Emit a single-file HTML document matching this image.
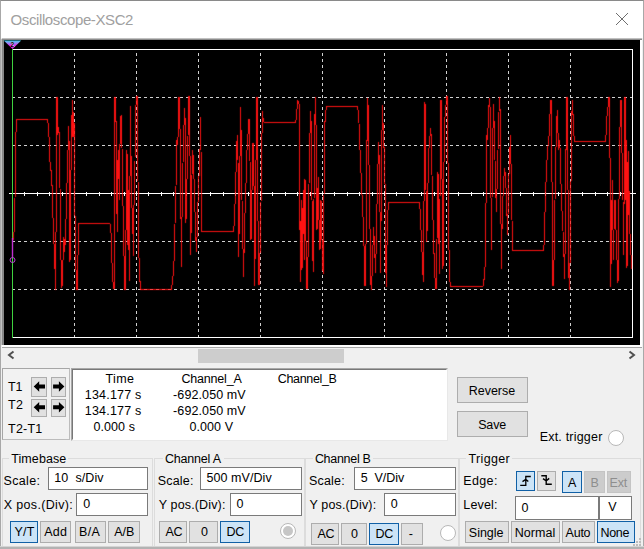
<!DOCTYPE html>
<html><head><meta charset="utf-8"><title>Oscilloscope-XSC2</title>
<style>
html,body{margin:0;padding:0;}
body{width:644px;height:549px;overflow:hidden;background:#f0f0f0;font-family:"Liberation Sans","DejaVu Sans",sans-serif;font-size:12.5px;color:#000;position:relative;}
.abs,.t,.btn,.inp,.grp{position:absolute;box-sizing:border-box;}
.win{position:absolute;left:0;top:0;width:644px;height:549px;box-sizing:border-box;border:1px solid #a8a8a8;border-top-color:#8a8a8a;}
.title{position:absolute;left:1px;top:1px;width:642px;height:37px;background:#fff;}
.t{white-space:nowrap;line-height:16px;height:16px;}
.btn{background:#e1e1e1;border:1px solid #adadad;}
.btn.sel{background:#cce4f7;border-color:#1060a6;}
.btn.dis{background:#cccccc;border-color:#c4c4c4;}
.inp{background:#fff;border:1px solid #7a7a7a;}
.grp{border:1px solid #dcdcdc;}
.radio{position:absolute;box-sizing:border-box;width:16px;height:16px;border-radius:50%;background:#fff;border:1px solid #b8b8b8;}
.scope{position:absolute;left:4px;top:40px;}
</style></head><body>
<div class="title"></div>
<div class="t" style="left:10.6px;top:12px;letter-spacing:-0.4px;font-size:15px;color:#a0a0a0;">Oscilloscope-XSC2</div>
<svg class="abs" style="left:615px;top:12px" width="14" height="14" viewBox="0 0 14 14"><path d="M1 1 L13 13 M13 1 L1 13" stroke="#6e6e6e" stroke-width="1" fill="none"/></svg>
<div class="abs" style="left:2px;top:38px;width:640px;height:1px;background:#c0c0c0"></div>
<div class="abs" style="left:2px;top:39px;width:640px;height:1px;background:#8c8c8c"></div>
<div class="abs" style="left:1px;top:39px;width:1px;height:306px;background:#c0c0c0"></div><div class="abs" style="left:2px;top:40px;width:2px;height:305px;background:#868686"></div>
<div class="abs" style="left:640px;top:40px;width:2px;height:307px;background:#fff"></div>
<div class="abs" style="left:2px;top:345px;width:640px;height:2px;background:#fff"></div>
<div class="abs" style="left:2px;top:347px;width:640px;height:1px;background:#a6a6a6"></div>
<svg class="scope" width="636" height="306" viewBox="4 40 636 306">
<defs><filter id="bl" x="-1%" y="-1%" width="102%" height="102%" color-interpolation-filters="sRGB"><feConvolveMatrix order="3" kernelMatrix="0.02 0.09 0.02 0.09 0.56 0.09 0.02 0.09 0.02" divisor="1" edgeMode="none" preserveAlpha="false"/></filter><linearGradient id="mk" x1="0" y1="0" x2="0" y2="1"><stop offset="0" stop-color="#38d0e8"/><stop offset="0.3" stop-color="#9a8cf4"/><stop offset="0.6" stop-color="#e028e8"/><stop offset="1" stop-color="#e020e0"/></linearGradient></defs>
<rect x="4" y="40" width="636" height="305" fill="#000"/>
<g stroke="#d0d0d0" stroke-width="1" stroke-dasharray="3 3" shape-rendering="crispEdges"><line x1="74.5" y1="53" x2="74.5" y2="337"/><line x1="136.5" y1="53" x2="136.5" y2="337"/><line x1="198.5" y1="53" x2="198.5" y2="337"/><line x1="260.5" y1="53" x2="260.5" y2="337"/><line x1="322.5" y1="53" x2="322.5" y2="337"/><line x1="384.5" y1="53" x2="384.5" y2="337"/><line x1="446.5" y1="53" x2="446.5" y2="337"/><line x1="508.5" y1="53" x2="508.5" y2="337"/><line x1="570.5" y1="53" x2="570.5" y2="337"/><line x1="12" y1="97.5" x2="632" y2="97.5"/><line x1="12" y1="145.5" x2="632" y2="145.5"/><line x1="12" y1="241.5" x2="632" y2="241.5"/><line x1="12" y1="289.5" x2="632" y2="289.5"/></g>
<g stroke="#fff" stroke-width="1" shape-rendering="crispEdges">
<line x1="12" y1="49.5" x2="633" y2="49.5"/><line x1="12" y1="337.5" x2="633" y2="337.5"/>
<line x1="632.5" y1="49" x2="632.5" y2="338"/>
<line x1="9" y1="193.5" x2="636" y2="193.5"/><line x1="24.5" y1="192" x2="24.5" y2="196"/><line x1="37.5" y1="192" x2="37.5" y2="196"/><line x1="49.5" y1="192" x2="49.5" y2="196"/><line x1="62.5" y1="192" x2="62.5" y2="196"/><line x1="74.5" y1="192" x2="74.5" y2="196"/><line x1="86.5" y1="192" x2="86.5" y2="196"/><line x1="99.5" y1="192" x2="99.5" y2="196"/><line x1="111.5" y1="192" x2="111.5" y2="196"/><line x1="124.5" y1="192" x2="124.5" y2="196"/><line x1="136.5" y1="192" x2="136.5" y2="196"/><line x1="148.5" y1="192" x2="148.5" y2="196"/><line x1="161.5" y1="192" x2="161.5" y2="196"/><line x1="173.5" y1="192" x2="173.5" y2="196"/><line x1="186.5" y1="192" x2="186.5" y2="196"/><line x1="198.5" y1="192" x2="198.5" y2="196"/><line x1="210.5" y1="192" x2="210.5" y2="196"/><line x1="223.5" y1="192" x2="223.5" y2="196"/><line x1="235.5" y1="192" x2="235.5" y2="196"/><line x1="248.5" y1="192" x2="248.5" y2="196"/><line x1="260.5" y1="192" x2="260.5" y2="196"/><line x1="272.5" y1="192" x2="272.5" y2="196"/><line x1="285.5" y1="192" x2="285.5" y2="196"/><line x1="297.5" y1="192" x2="297.5" y2="196"/><line x1="310.5" y1="192" x2="310.5" y2="196"/><line x1="322.5" y1="192" x2="322.5" y2="196"/><line x1="334.5" y1="192" x2="334.5" y2="196"/><line x1="347.5" y1="192" x2="347.5" y2="196"/><line x1="359.5" y1="192" x2="359.5" y2="196"/><line x1="372.5" y1="192" x2="372.5" y2="196"/><line x1="384.5" y1="192" x2="384.5" y2="196"/><line x1="396.5" y1="192" x2="396.5" y2="196"/><line x1="409.5" y1="192" x2="409.5" y2="196"/><line x1="421.5" y1="192" x2="421.5" y2="196"/><line x1="434.5" y1="192" x2="434.5" y2="196"/><line x1="446.5" y1="192" x2="446.5" y2="196"/><line x1="458.5" y1="192" x2="458.5" y2="196"/><line x1="471.5" y1="192" x2="471.5" y2="196"/><line x1="483.5" y1="192" x2="483.5" y2="196"/><line x1="496.5" y1="192" x2="496.5" y2="196"/><line x1="508.5" y1="192" x2="508.5" y2="196"/><line x1="520.5" y1="192" x2="520.5" y2="196"/><line x1="533.5" y1="192" x2="533.5" y2="196"/><line x1="545.5" y1="192" x2="545.5" y2="196"/><line x1="558.5" y1="192" x2="558.5" y2="196"/><line x1="570.5" y1="192" x2="570.5" y2="196"/><line x1="582.5" y1="192" x2="582.5" y2="196"/><line x1="595.5" y1="192" x2="595.5" y2="196"/><line x1="607.5" y1="192" x2="607.5" y2="196"/><line x1="620.5" y1="192" x2="620.5" y2="196"/></g>
<line x1="12.5" y1="49" x2="12.5" y2="338" stroke="#3fd23f" stroke-width="1" shape-rendering="crispEdges"/>
<polyline points="13.3,240.0 14.5,226.0 15.5,170.0 15.6,146.0 16.4,119.3 16.4,119.3 47.8,119.3 47.8,119.3 48.5,130.0 49.7,147.0 50.2,170.0 51.7,170.0 52.2,194.0 52.7,210.0 55.0,269.0 55.2,289.0 55.6,289.0 57.0,97.0 57.6,97.0 57.8,135.0 58.9,127.0 59.5,152.0 61.4,287.0 62.0,287.0 63.9,237.0 64.6,252.0 65.5,237.0 67.6,162.0 68.9,126.0 69.3,180.0 70.0,262.0 70.6,193.0 72.3,100.0 72.8,100.0 73.0,137.0 73.3,112.0 73.6,137.0 73.9,113.0 74.2,138.0 74.6,193.0 75.8,260.0 76.4,289.0 77.6,289.0 78.2,240.0 78.8,223.4 78.8,223.4 109.6,223.4 109.9,223.4 111.2,234.6 112.4,276.8 113.7,288.0 114.2,288.0 114.9,97.5 115.7,97.5 116.2,135.0 117.2,232.0 118.0,160.0 118.6,150.0 119.3,200.0 120.2,130.0 121.1,115.0 121.8,135.0 122.5,180.0 124.3,270.0 124.8,289.0 125.3,289.0 126.2,215.0 127.0,150.0 127.4,245.0 127.8,195.0 128.3,250.0 128.8,190.0 129.2,250.0 129.6,281.0 130.3,106.0 130.9,145.0 131.5,200.0 132.5,215.0 133.6,256.0 133.9,215.0 134.4,172.0 135.0,165.0 135.2,109.0 136.3,104.0 136.6,96.5 137.2,96.5 137.6,130.0 138.5,242.0 139.7,279.0 141.0,289.3 141.0,289.3 171.5,289.3 171.5,289.3 173.8,269.0 174.5,242.0 175.8,195.0 177.0,140.0 177.8,145.0 179.0,97.5 179.6,97.5 180.3,150.0 181.5,267.0 182.2,200.0 183.5,140.0 184.6,108.0 185.3,125.0 185.9,223.0 186.6,200.0 187.4,160.0 189.0,96.5 189.4,96.5 189.9,140.0 190.7,254.5 191.5,200.0 192.5,150.0 193.5,160.0 194.6,200.0 196.4,252.0 197.3,230.0 198.3,190.0 199.8,160.0 200.6,117.0 201.0,150.0 201.5,200.0 201.9,231.0 201.9,231.0 233.7,231.0 233.7,231.0 234.4,220.0 235.4,194.0 236.7,147.0 237.4,134.7 238.0,160.0 238.7,257.0 239.5,200.0 240.6,107.4 241.2,140.0 242.0,200.0 243.6,277.0 244.4,230.0 245.5,200.0 247.0,150.0 249.0,118.6 249.6,135.0 250.3,180.0 251.0,240.0 251.8,200.0 253.0,143.0 253.8,160.0 254.8,285.5 255.5,200.0 256.8,97.5 257.3,97.5 257.7,180.0 258.5,284.0 259.2,284.0 260.5,235.0 261.8,150.0 262.3,111.0 263.0,118.0 264.3,122.8 264.3,122.8 295.8,122.8 295.8,122.8 296.5,115.0 297.8,100.0 298.8,104.0 299.5,105.0 299.8,193.0 300.3,282.0 300.8,230.0 301.5,200.0 302.0,270.0 302.8,215.0 303.5,190.0 304.3,260.0 305.0,179.0 305.8,230.0 307.0,288.0 307.6,288.0 308.5,220.0 309.5,150.0 310.7,111.0 311.3,130.0 312.0,200.0 313.2,272.0 314.0,200.0 315.2,97.5 315.7,97.5 316.3,150.0 317.0,230.0 317.8,200.0 318.2,177.0 319.0,220.0 320.0,250.0 321.0,200.0 322.0,240.0 323.1,274.0 323.8,230.0 324.4,132.0 325.4,115.0 326.4,106.6 326.4,106.6 357.3,106.6 357.5,106.6 358.7,115.0 360.0,150.0 361.2,177.0 363.7,232.0 364.9,285.5 365.4,285.5 366.2,232.0 367.4,98.7 367.9,98.7 368.6,135.0 369.5,200.0 371.1,289.3 371.6,289.3 373.6,227.0 374.8,252.0 375.6,273.0 376.3,240.0 377.2,195.0 378.6,142.0 379.3,165.0 379.9,200.0 380.6,273.0 381.2,200.0 382.3,105.0 383.0,122.0 383.6,145.0 384.8,152.0 385.5,260.0 386.5,286.8 387.3,222.0 388.5,202.3 388.5,202.3 419.6,202.3 419.6,202.3 420.3,213.5 422.0,252.0 423.3,281.8 423.8,245.0 424.5,102.4 425.0,102.4 425.5,145.0 426.0,190.0 426.8,242.0 427.6,200.0 428.8,150.0 430.7,128.5 431.3,140.0 432.0,175.0 433.0,220.0 434.5,270.0 435.7,288.0 436.2,288.0 437.0,240.0 438.0,172.0 438.7,220.0 439.4,274.0 440.0,200.0 440.7,100.0 441.2,100.0 441.8,160.0 443.0,269.0 443.4,200.0 443.6,163.0 444.6,160.0 444.8,119.0 445.8,112.0 446.2,100.0 446.9,96.5 447.4,96.5 447.9,150.0 448.4,207.0 449.4,276.8 450.6,286.3 450.6,286.3 482.9,286.3 482.9,286.3 484.1,279.0 485.4,262.0 486.1,194.8 486.6,134.7 487.5,140.0 489.3,98.0 489.9,98.0 490.4,135.0 491.5,249.5 492.2,180.0 493.4,104.0 494.0,120.0 495.0,160.0 496.4,212.0 497.5,170.0 498.5,130.0 499.4,97.5 499.9,97.5 500.4,150.0 501.4,269.4 502.0,230.0 503.2,190.0 504.5,168.0 505.5,175.0 506.5,200.0 507.6,234.6 508.3,200.0 509.4,160.0 510.6,134.7 511.1,170.0 512.0,220.0 512.6,250.7 512.6,250.7 543.6,250.7 543.6,250.7 544.4,239.5 545.4,194.8 547.4,152.0 549.1,134.7 550.6,100.0 551.1,100.0 551.6,140.0 552.2,200.0 553.0,285.5 553.6,285.5 554.5,230.0 555.5,170.0 556.5,125.0 557.3,110.0 557.9,130.0 558.8,150.0 559.8,140.0 560.6,170.0 561.5,200.0 562.5,222.0 563.5,240.0 564.7,279.0 565.3,230.0 566.0,150.0 566.7,97.5 567.2,97.5 567.7,150.0 568.4,240.0 569.2,289.0 569.7,289.0 570.4,230.0 571.4,150.0 572.2,100.0 572.7,100.0 573.4,132.0 574.7,141.0 574.7,141.0 605.7,141.0 605.7,141.0 607.0,116.0 609.0,97.5 609.7,97.5 610.2,193.0 610.7,286.8 611.2,250.0 612.0,200.0 612.7,180.0 613.2,259.5 614.0,230.0 615.0,200.0 616.0,230.0 617.0,260.0 618.0,283.0 618.6,240.0 619.5,150.0 620.6,100.0 621.1,100.0 621.6,127.0 622.2,165.0 623.0,200.0 623.8,255.0 624.1,185.0 624.4,140.0 624.7,200.0 625.0,97.5 625.5,97.5 625.8,200.0 626.1,140.0 626.5,215.0 627.0,268.0 627.4,200.0 628.2,151.0 628.6,215.0 629.0,190.0 629.8,230.0 631.0,255.0 631.8,269.0" fill="none" stroke="#ff1212" stroke-width="1" stroke-linejoin="miter" shape-rendering="crispEdges" filter="url(#bl)"/>
<polygon points="3.8,40.5 21.2,40.5 12.5,49" fill="url(#mk)"/>
<text x="11" y="47.2" font-family="'Liberation Sans',sans-serif" font-size="6.5" font-weight="bold" fill="#fff">1</text><text x="10.4" y="46.8" font-family="'Liberation Sans',sans-serif" font-size="6.5" font-weight="bold" fill="#000">2</text>
<line x1="12.5" y1="238" x2="12.5" y2="257" stroke="#c030d0" stroke-width="1.4"/>
<circle cx="12.5" cy="260" r="2.5" fill="none" stroke="#c040d8" stroke-width="1"/>
</svg>
<!-- scrollbar -->
<div class="abs" style="left:198px;top:349px;width:146px;height:14px;background:#cdcdcd"></div>
<svg class="abs" style="left:6px;top:350px" width="10" height="10" viewBox="0 0 10 10"><path d="M7.5 1.5 L3 5 L7.5 8.5" stroke="#505050" stroke-width="2" fill="none"/></svg>
<svg class="abs" style="left:627px;top:350px" width="10" height="10" viewBox="0 0 10 10"><path d="M2.5 1.5 L7 5 L2.5 8.5" stroke="#505050" stroke-width="2" fill="none"/></svg>
<!-- cursor panel -->
<div class="abs" style="left:2px;top:368px;width:68px;height:72px;border:1px solid #a6a6a6;border-right-color:#bcbcbc;border-bottom-color:#bcbcbc;background:#f2f2f2"></div>
<div class="btn " style="left:31px;top:377px;width:16px;height:20px"></div><svg class="abs" style="left:0;top:0" width="80" height="440"><path d="M33.699999999999996 386.5 L39.199999999999996 381.3 V384.5 H45.0 V388.5 H39.199999999999996 V391.7 Z" fill="#000"/></svg>
<div class="btn " style="left:51px;top:377px;width:15px;height:20px"></div><svg class="abs" style="left:0;top:0" width="80" height="440"><path d="M64.4 386.5 L58.900000000000006 381.3 V384.5 H53.1 V388.5 H58.900000000000006 V391.7 Z" fill="#000"/></svg>
<div class="btn " style="left:31px;top:399px;width:16px;height:18px"></div><svg class="abs" style="left:0;top:0" width="80" height="440"><path d="M33.699999999999996 407.2 L39.199999999999996 402.0 V405.2 H45.0 V409.2 H39.199999999999996 V412.4 Z" fill="#000"/></svg>
<div class="btn " style="left:51px;top:399px;width:15px;height:18px"></div><svg class="abs" style="left:0;top:0" width="80" height="440"><path d="M64.4 407.2 L58.900000000000006 402.0 V405.2 H53.1 V409.2 H58.900000000000006 V412.4 Z" fill="#000"/></svg>

<!-- readout -->
<div class="abs" style="left:71px;top:368px;width:377px;height:73px;background:#fff;border:1px solid;border-color:#a8a8a8 #e8e8e8 #e8e8e8 #a8a8a8"><div class="abs" style="left:0;top:0;width:375px;height:71px;border:1px solid;border-color:#787878 #fff #fff #787878"></div></div>
<div class="btn " style="left:457px;top:377px;width:71px;height:26px"></div><div class="btn " style="left:457px;top:411px;width:71px;height:26px"></div>
<div class="radio" style="left:608px;top:430px"></div>
<!-- groups -->
<div class="grp" style="left:2px;top:458px;width:151px;height:92px"></div><div class="abs" style="left:9px;top:456px;width:59px;height:4px;background:#f0f0f0"></div><div class="t" style="left:11.2px;top:451px;letter-spacing:0.1px;">Timebase</div>
<div class="grp" style="left:154px;top:458px;width:151px;height:92px"></div><div class="abs" style="left:163px;top:456px;width:61px;height:4px;background:#f0f0f0"></div><div class="t" style="left:164.9px;top:451px;letter-spacing:-0.2px;">Channel A</div>
<div class="grp" style="left:305px;top:458px;width:154px;height:92px"></div><div class="abs" style="left:313px;top:456px;width:60px;height:4px;background:#f0f0f0"></div><div class="t" style="left:314.9px;top:451px;letter-spacing:-0.3px;">Channel B</div>
<div class="grp" style="left:459px;top:458px;width:182px;height:92px"></div><div class="abs" style="left:466px;top:456px;width:46px;height:4px;background:#f0f0f0"></div><div class="t" style="left:468.5px;top:451px;letter-spacing:0.35px;">Trigger</div>
<div class="inp" style="left:48px;top:467px;width:100px;height:23px"></div><div class="inp" style="left:76px;top:493px;width:72px;height:23px"></div>
<div class="btn sel" style="left:10px;top:521px;width:28px;height:22px"></div><div class="btn " style="left:40px;top:521px;width:31px;height:22px"></div><div class="btn " style="left:75px;top:521px;width:31px;height:22px"></div><div class="btn " style="left:108px;top:521px;width:32px;height:22px"></div>
<div class="inp" style="left:200px;top:467px;width:102px;height:23px"></div><div class="inp" style="left:230px;top:493px;width:72px;height:23px"></div>
<div class="btn " style="left:159px;top:521px;width:28px;height:22px"></div><div class="btn " style="left:189px;top:521px;width:29px;height:22px"></div><div class="btn sel" style="left:220px;top:521px;width:30px;height:22px"></div>
<div class="radio" style="left:280px;top:523px"><div class="abs" style="left:2px;top:2px;width:10px;height:10px;border-radius:50%;background:#c6c6c6"></div></div>
<div class="inp" style="left:354px;top:467px;width:102px;height:23px"></div><div class="inp" style="left:384px;top:493px;width:72px;height:23px"></div>
<div class="btn " style="left:311px;top:523px;width:28px;height:22px"></div><div class="btn " style="left:341px;top:523px;width:26px;height:22px"></div><div class="btn sel" style="left:369px;top:523px;width:30px;height:22px"></div><div class="btn " style="left:401px;top:523px;width:22px;height:22px"></div>
<div class="radio" style="left:440px;top:525px"></div>
<div class="btn sel" style="left:516px;top:471px;width:19px;height:20px"></div><div class="btn " style="left:537px;top:471px;width:19px;height:20px"></div>
<svg class="abs" style="left:516px;top:471px" width="40" height="21" viewBox="0 0 40 21"><path d="M4.2 14.4 H9.8 V5.5 H14.8 M6.5 10.6 L9.8 8.4 L12.3 10.6" stroke="#000" stroke-width="1.3" fill="none"/><path d="M25.3 4.8 H30.2 V13.3 H35.8 M27 7.6 L30.2 9.9 L33.2 7.4" stroke="#000" stroke-width="1.4" fill="none"/></svg>
<div class="btn sel" style="left:562px;top:471px;width:20px;height:22px"></div><div class="btn dis" style="left:584px;top:471px;width:21px;height:22px"></div><div class="btn dis" style="left:607px;top:471px;width:24px;height:22px"></div>
<div class="inp" style="left:515px;top:496px;width:84px;height:24px"></div><div class="inp" style="left:599px;top:496px;width:33px;height:24px"></div>
<div class="btn " style="left:465px;top:521px;width:44px;height:22px"></div><div class="btn " style="left:511px;top:521px;width:49px;height:22px"></div><div class="btn " style="left:562px;top:521px;width:33px;height:22px"></div><div class="btn sel" style="left:597px;top:521px;width:38px;height:22px"></div>
<div class="t" style="left:8.1px;top:379px;letter-spacing:-0.3px;">T1</div>
<div class="t" style="left:8.1px;top:397px;letter-spacing:0.3px;">T2</div>
<div class="t" style="left:8.1px;top:421px;letter-spacing:0.2px;">T2-T1</div>
<div class="t" style="left:105.5px;top:371px;letter-spacing:0.35px;">Time</div>
<div class="t" style="left:181.5px;top:371px;letter-spacing:-0.2px;">Channel_A</div>
<div class="t" style="left:277.8px;top:371px;letter-spacing:-0.35px;">Channel_B</div>
<div class="t" style="left:84.8px;top:387px;letter-spacing:0.2px;">134.177 s</div>
<div class="t" style="left:173.1px;top:387px;letter-spacing:0.1px;">-692.050 mV</div>
<div class="t" style="left:84.8px;top:403px;letter-spacing:0.2px;">134.177 s</div>
<div class="t" style="left:173.1px;top:403px;letter-spacing:0.1px;">-692.050 mV</div>
<div class="t" style="left:93.6px;top:419px;letter-spacing:0.05px;">0.000 s</div>
<div class="t" style="left:189.6px;top:419px;letter-spacing:0.05px;">0.000 V</div>
<div class="t" style="left:468.7px;top:383px;">Reverse</div>
<div class="t" style="left:478.2px;top:417px;letter-spacing:-0.15px;">Save</div>
<div class="t" style="left:539.7px;top:429px;letter-spacing:0.2px;">Ext. trigger</div>
<div class="t" style="left:3.5px;top:473px;letter-spacing:0.35px;">Scale:</div>
<div class="t" style="left:54.2px;top:470px;letter-spacing:0.1px;">10&nbsp; s/Div</div>
<div class="t" style="left:3.7px;top:497px;letter-spacing:0.35px;">X pos.(Div):</div>
<div class="t" style="left:83.2px;top:496px;">0</div>
<div class="t" style="left:14.4px;top:524px;letter-spacing:0.3px;">Y/T</div>
<div class="t" style="left:44.2px;top:524px;letter-spacing:0.2px;">Add</div>
<div class="t" style="left:79px;top:524px;letter-spacing:0.3px;">B/A</div>
<div class="t" style="left:114.3px;top:524px;letter-spacing:-0.05px;">A/B</div>
<div class="t" style="left:157.7px;top:473px;letter-spacing:0.2px;">Scale:</div>
<div class="t" style="left:206.6px;top:470px;letter-spacing:0.05px;">500 mV/Div</div>
<div class="t" style="left:158.7px;top:497px;letter-spacing:0.15px;">Y pos.(Div):</div>
<div class="t" style="left:236.4px;top:496px;">0</div>
<div class="t" style="left:165.4px;top:524px;letter-spacing:-0.3px;">AC</div>
<div class="t" style="left:200.9px;top:524px;">0</div>
<div class="t" style="left:226.5px;top:524px;letter-spacing:-0.3px;">DC</div>
<div class="t" style="left:308.9px;top:473px;letter-spacing:0.2px;">Scale:</div>
<div class="t" style="left:360.8px;top:470px;letter-spacing:-0.05px;">5&nbsp; V/Div</div>
<div class="t" style="left:309.4px;top:497px;letter-spacing:0.15px;">Y pos.(Div):</div>
<div class="t" style="left:390.7px;top:496px;">0</div>
<div class="t" style="left:317.4px;top:526px;letter-spacing:-0.3px;">AC</div>
<div class="t" style="left:350.9px;top:526px;">0</div>
<div class="t" style="left:375.5px;top:526px;letter-spacing:-0.3px;">DC</div>
<div class="t" style="left:408.8px;top:526px;">-</div>
<div class="t" style="left:463.3px;top:473px;letter-spacing:0.35px;">Edge:</div>
<div class="t" style="left:463.3px;top:497px;letter-spacing:0.15px;">Level:</div>
<div class="t" style="left:568px;top:475px;">A</div>
<div class="t" style="left:590.5px;top:475px;color:#8e8e8e;">B</div>
<div class="t" style="left:609.5px;top:475px;letter-spacing:-0.2px;color:#8e8e8e;">Ext</div>
<div class="t" style="left:521.4px;top:500px;">0</div>
<div class="t" style="left:608.2px;top:499px;">V</div>
<div class="t" style="left:468.8px;top:525px;">Single</div>
<div class="t" style="left:514.7px;top:525px;letter-spacing:0.05px;">Normal</div>
<div class="t" style="left:565.6px;top:525px;letter-spacing:-0.25px;">Auto</div>
<div class="t" style="left:600.6px;top:525px;letter-spacing:-0.35px;">None</div>
<div class="win"></div>
<div class="abs" style="left:0;top:546px;width:644px;height:1px;background:#d4d4d4"></div><div class="abs" style="left:0;top:547px;width:644px;height:2px;background:#b2b2b2"></div>
<svg class="abs" style="left:633px;top:538px" width="9" height="9" viewBox="0 0 9 9" fill="#bdbdbd"><rect x="6" y="0" width="2" height="2"/><rect x="3" y="3" width="2" height="2"/><rect x="6" y="3" width="2" height="2"/><rect x="0" y="6" width="2" height="2"/><rect x="3" y="6" width="2" height="2"/><rect x="6" y="6" width="2" height="2"/></svg>
</body></html>
